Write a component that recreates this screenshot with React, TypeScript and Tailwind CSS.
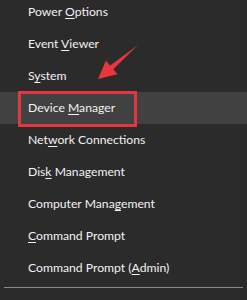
import React from "react";

type Item = { pre: string; key: string; post: string; active?: boolean };

const ITEMS: Item[] = [
  { pre: "Power ", key: "O", post: "ptions" },
  { pre: "Event ", key: "V", post: "iewer" },
  { pre: "S", key: "y", post: "stem" },
  { pre: "Device ", key: "M", post: "anager", active: true },
  { pre: "Net", key: "w", post: "ork Connections" },
  { pre: "Dis", key: "k", post: " Management" },
  { pre: "Computer Mana", key: "g", post: "ement" },
  { pre: "", key: "C", post: "ommand Prompt" },
  { pre: "Command Prompt (", key: "A", post: "dmin)" },
];

export default function App() {
  return (
    <div
      className="relative w-[247px] h-[300px] overflow-hidden bg-[#2b2b2b] text-[#f2f2f2]"
      style={{ fontFamily: 'Lato, "Noto Sans", sans-serif' }}
    >
      <ul className="-mt-1 flex flex-col">
        {ITEMS.map((it) => (
          <li
            key={it.pre + it.key}
            className={
              it.active
                ? "relative flex h-8 items-center bg-[#414141] pl-[28px] text-[12.2px]"
                : "relative flex h-8 items-center pl-[28px] text-[12.2px]"
            }
          >
            <span>
              {it.pre}
              <span className="underline underline-offset-2 decoration-1">{it.key}</span>
              {it.post}
            </span>
            {it.active && (
              <span className="absolute left-[18px] top-[-1px] h-[36px] w-[119px] border-[3px] border-[#e2383d]" />
            )}
          </li>
        ))}
      </ul>

      <div className="mx-1 mt-[3px] h-px bg-[#8a8a8a]" />

      {/* pointer arrow */}
      <svg
        className="absolute left-0 top-0"
        width="247"
        height="300"
        viewBox="0 0 247 300"
      >
        <polygon
          points="138,45 113.3,69.2 117.5,74.2 98,79 105.9,60.4 110.1,65.4"
          fill="#e8363c"
        />
      </svg>
    </div>
  );
}
